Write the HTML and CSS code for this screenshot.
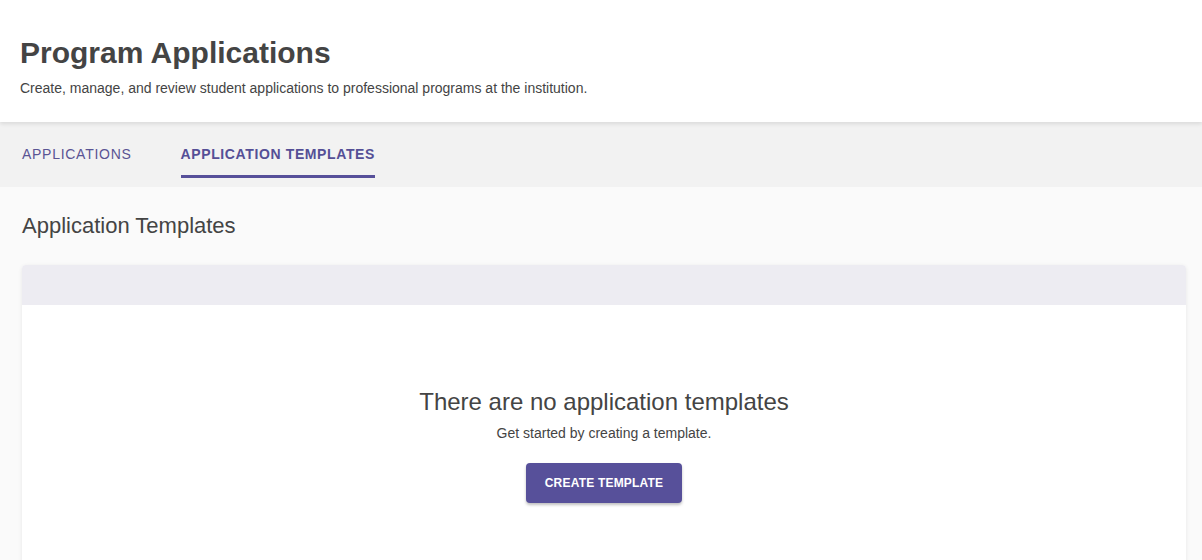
FILE: index.html
```html
<!DOCTYPE html>
<html lang="en">
<head>
<meta charset="utf-8">
<title>Program Applications</title>
<link rel="stylesheet" href="styles.css">
</head>
<body>
<header class="page-header">
  <h1 class="page-title">Program Applications</h1>
  <p class="page-subtitle">Create, manage, and review student applications to professional programs at the institution.</p>
</header>
<nav class="tabs">
  <a class="tab">Applications</a>
  <a class="tab tab-active">Application Templates</a>
</nav>
<main class="content">
  <h2 class="section-title">Application Templates</h2>
  <section class="card">
    <div class="card-header"></div>
    <div class="card-body">
      <div class="empty-title">There are no application templates</div>
      <div class="empty-text">Get started by creating a template.</div>
      <button class="btn-primary">Create Template</button>
    </div>
  </section>
</main>
</body>
</html>
```
FILE: styles.css
```css
* { box-sizing: border-box; }
html, body { margin: 0; padding: 0; height: 100%; }
body {
  font-family: "Liberation Sans", Arial, sans-serif;
  color: #444;
  background: #fafafa;
  overflow: hidden;
}
.page-header {
  position: relative;
  z-index: 2;
  background: #fff;
  padding: 35px 20px 24px;
  box-shadow: 0 2px 4px rgba(0,0,0,0.1);
}
.page-title {
  margin: 0;
  font-size: 30px;
  line-height: 36px;
  font-weight: bold;
  color: #444;
}
.page-subtitle {
  margin: 7px 0 0;
  font-size: 14px;
  line-height: 20px;
  color: #444;
}
.tabs {
  display: flex;
  gap: 49px;
  background: #f2f2f2;
  padding: 0 22px 9px;
}
.tab {
  display: block;
  padding: 22px 0 11px;
  border-bottom: 3px solid transparent;
  font-size: 14px;
  line-height: 20px;
  text-transform: uppercase;
  letter-spacing: 0.72px;
  color: #5a5494;
  cursor: pointer;
}
.tab-active {
  font-weight: bold;
  letter-spacing: 0.62px;
  color: #554f96;
  border-bottom-color: #57509a;
}
.content {
  padding: 25px 16px 0 22px;
}
.section-title {
  margin: 0 0 25px;
  font-size: 22px;
  line-height: 28px;
  font-weight: normal;
  color: #444;
}
.card {
  background: #fff;
  border-radius: 4px;
  box-shadow: 0 1px 4px rgba(0,0,0,0.08);
  overflow: hidden;
}
.card-header {
  height: 40px;
  background: #edecf2;
}
.card-body {
  display: flex;
  flex-direction: column;
  align-items: center;
  padding: 82px 0 80px;
}
.empty-title {
  font-size: 24px;
  line-height: 30px;
  color: #444;
}
.empty-text {
  margin-top: 6px;
  font-size: 14px;
  line-height: 20px;
  color: #444;
}
.btn-primary {
  margin-top: 20px;
  height: 40px;
  width: 156px;
  border: none;
  border-radius: 4px;
  background: #57509a;
  color: #fff;
  font-family: "Liberation Sans", Arial, sans-serif;
  font-size: 12px;
  font-weight: bold;
  letter-spacing: 0.2px;
  text-transform: uppercase;
  box-shadow: 0 2px 3px rgba(0,0,0,0.25);
  cursor: pointer;
}
```
